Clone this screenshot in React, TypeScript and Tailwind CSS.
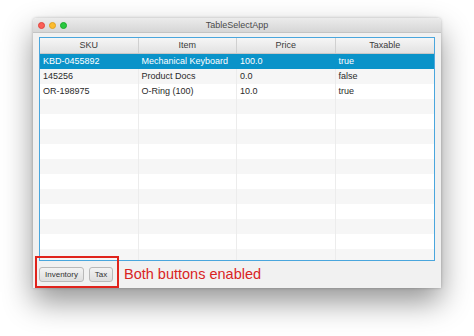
import React from "react";

const rows: [string, string, string, string][] = [
  ["KBD-0455892", "Mechanical Keyboard", "100.0", "true"],
  ["145256", "Product Docs", "0.0", "false"],
  ["OR-198975", "O-Ring (100)", "10.0", "true"],
];

export default function App() {
  const all = Array.from({ length: 14 }, (_, i) => rows[i] ?? ["", "", "", ""]);
  return (
    <div
      className="w-[474px] h-[336px] bg-white pt-[18px] pl-[33px] relative overflow-hidden"
      style={{ fontFamily: '"Liberation Sans", Arial, sans-serif' }}
    >
      <div className="w-[408px] h-[270px] flex flex-col rounded-t-[4px] shadow-[0_14px_30px_rgba(0,0,0,0.42),0_0_3px_rgba(0,0,0,0.25)] relative">
        {/* title bar */}
        <div className="h-[15px] flex items-center rounded-t-[4px] bg-gradient-to-b from-[#ebebeb] to-[#d6d6d6] border-b border-[#c4c4c4]">
          <div className="w-[50px] flex items-center gap-[4px] pl-[5px]">
            <span className="w-[7px] h-[7px] rounded-full bg-[#fc5f57] border border-[#e0443e]" />
            <span className="w-[7px] h-[7px] rounded-full bg-[#fdbc2e] border border-[#dea123]" />
            <span className="w-[7px] h-[7px] rounded-full bg-[#29c840] border border-[#1aab29]" />
          </div>
          <div className="flex-1 text-center text-[9px] text-[#4a4a4a] leading-none">TableSelectApp</div>
          <div className="w-[50px]" />
        </div>
        {/* content */}
        <div className="flex-1 bg-[#f1f1f1] pt-[4px] px-[6px] flex flex-col">
          <div className="h-[224px] border border-[#4aa6dd] bg-white flex flex-col overflow-hidden">
            <div className="h-[16px] shrink-0 grid grid-cols-4 bg-gradient-to-b from-[#f6f6f6] to-[#e2e2e2] border-b border-[#c8c8c8]">
              {["SKU", "Item", "Price", "Taxable"].map((h, i) => (
                <div
                  key={h}
                  className={`flex items-center justify-center text-[9px] text-[#3a3a3a] ${i < 3 ? "border-r border-[#d0d0d0]" : ""}`}
                >
                  {h}
                </div>
              ))}
            </div>
            {all.map((r, ri) => {
              const sel = ri === 0;
              const bg = sel ? "bg-[#0a93c9]" : ri % 2 === 0 ? "bg-white" : "bg-[#f6f6f6]";
              return (
                <div key={ri} className={`h-[15px] shrink-0 grid grid-cols-4 ${bg}`}>
                  {r.map((c, ci) => (
                    <div
                      key={ci}
                      className={`flex items-center pl-[3px] text-[9px] ${sel ? "text-white" : "text-[#2a2a2a]"} ${ci < 3 ? (sel ? "border-r border-[#0a93c9]" : "border-r border-[#ececec]") : ""}`}
                    >
                      {c}
                    </div>
                  ))}
                </div>
              );
            })}
          </div>
          <div className="flex items-center gap-[5px] mt-[6px]">
            <button className="h-[15px] w-[45px] rounded-[3px] border border-[#b9b9b9] bg-gradient-to-b from-[#f3f3f3] to-[#dedede] text-[8px] text-[#333] leading-none">
              Inventory
            </button>
            <button className="h-[15px] w-[24px] rounded-[3px] border border-[#b9b9b9] bg-gradient-to-b from-[#f3f3f3] to-[#dedede] text-[8px] text-[#333] leading-none">
              Tax
            </button>
            <span className="ml-[6px] text-[14.5px] text-[#d9231f] leading-none">Both buttons enabled</span>
          </div>
        </div>
        {/* annotation box */}
        <div className="absolute left-[2px] top-[238px] w-[84px] h-[32px] border-2 border-[#e0231c]" />
      </div>
    </div>
  );
}
